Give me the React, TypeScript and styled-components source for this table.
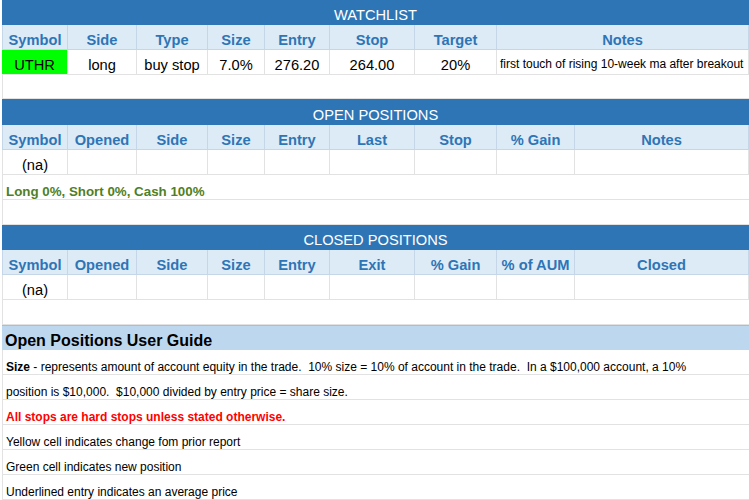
import React from "react";
import styled, { createGlobalStyle } from "styled-components";

const GlobalStyle = createGlobalStyle`
  html, body { margin: 0; padding: 0; background: #ffffff; }
  body { font-family: "Liberation Sans", Arial, sans-serif; color: #000; }
  * { box-sizing: border-box; }
`;

const COLS = "65px 69px 71px 57px 65px 85px 82px 78px 1fr";

const Sheet = styled.div`
  margin-left: 2px;
  width: 747px;
  display: flex;
  flex-direction: column;
`;

const TitleBar = styled.div<{ $h?: number }>`
  height: ${(p) => p.$h ?? 25}px;
  background: #2e75b6;
  color: #ffffff;
  font-size: 14.67px;
  display: flex;
  align-items: flex-end;
  justify-content: center;
  padding-bottom: 2px;
  line-height: 16px;
`;

const GridRow = styled.div<{ $head?: boolean }>`
  display: grid;
  grid-template-columns: ${COLS};
  height: 25px;
  background: ${(p) => (p.$head ? "#ddebf7" : "#ffffff")};
  border-left: 1px solid ${(p) => (p.$head ? "#c5d6e8" : "#e2e2e2")};
  border-bottom: 1px solid ${(p) => (p.$head ? "#c5d6e8" : "#e2e2e2")};
`;

const HeadCell = styled.div<{ $span?: number }>`
  grid-column: span ${(p) => p.$span ?? 1};
  border-right: 1px solid #c5d6e8;
  color: #2e75b6;
  font-weight: bold;
  font-size: 14.67px;
  line-height: 16px;
  display: flex;
  align-items: flex-end;
  justify-content: center;
  padding-bottom: 1px;
  white-space: nowrap;
`;

const Cell = styled.div<{ $span?: number; $green?: boolean; $left?: boolean; $small?: boolean }>`
  grid-column: span ${(p) => p.$span ?? 1};
  margin-left: ${(p) => (p.$green ? "-1px" : "0")};
  border-right: 1px solid #e2e2e2;
  background: ${(p) => (p.$green ? "#00ff00" : "transparent")};
  font-size: ${(p) => (p.$small ? "12px" : "14.67px")};
  line-height: 16px;
  display: flex;
  align-items: flex-end;
  justify-content: ${(p) => (p.$left ? "flex-start" : "center")};
  padding: 0 ${(p) => (p.$left ? "3px" : "0")} ${(p) => (p.$small ? "2px" : "1px")};
  white-space: nowrap;
  overflow: hidden;
`;

const LineRow = styled.div<{ $tone?: "plain" | "green" | "red"; $h?: number }>`
  height: ${(p) => p.$h ?? 25}px;
  border-left: 1px solid #e2e2e2;
  border-bottom: 1px solid #e2e2e2;
  display: flex;
  align-items: flex-end;
  padding: 0 3px 0;
  line-height: 14px;
  white-space: pre;
  font-size: ${(p) => (p.$tone === "green" ? "13.33px" : "12px")};
  font-weight: ${(p) => (p.$tone === "green" || p.$tone === "red" ? "bold" : "normal")};
  color: ${(p) =>
    p.$tone === "green" ? "#4f7f26" : p.$tone === "red" ? "#ff0000" : "#000000"};
`;

const GuideHeader = styled.div`
  height: 25px;
  background: #bdd7ee;
  border-top: 1px solid #9fc0e0;
  display: flex;
  align-items: flex-end;
  padding: 0 3px 1px;
  font-size: 16px;
  line-height: 16px;
  font-weight: bold;
  color: #000;
`;

const watchHead = ["Symbol", "Side", "Type", "Size", "Entry", "Stop", "Target"];
const openHead = ["Symbol", "Opened", "Side", "Size", "Entry", "Last", "Stop", "% Gain", "Notes"];
const closedHead = ["Symbol", "Opened", "Side", "Size", "Entry", "Exit", "% Gain", "% of AUM", "Closed"];

const EmptyCells = ({ n }: { n: number }) => (
  <>
    {Array.from({ length: n }).map((_, i) => (
      <Cell key={i} />
    ))}
  </>
);

export default function App() {
  return (
    <>
      <GlobalStyle />
      <Sheet>
        <TitleBar $h={25}>WATCHLIST</TitleBar>
        <GridRow $head>
          {watchHead.map((h) => (
            <HeadCell key={h}>{h}</HeadCell>
          ))}
          <HeadCell $span={2}>Notes</HeadCell>
        </GridRow>
        <GridRow>
          <Cell $green>UTHR</Cell>
          <Cell>long</Cell>
          <Cell>buy stop</Cell>
          <Cell>7.0%</Cell>
          <Cell>276.20</Cell>
          <Cell>264.00</Cell>
          <Cell>20%</Cell>
          <Cell $span={2} $left $small>
            first touch of rising 10-week ma after breakout
          </Cell>
        </GridRow>
        <LineRow $h={24} />

        <TitleBar $h={26}>OPEN POSITIONS</TitleBar>
        <GridRow $head>
          {openHead.map((h) => (
            <HeadCell key={h}>{h}</HeadCell>
          ))}
        </GridRow>
        <GridRow>
          <Cell>(na)</Cell>
          <EmptyCells n={8} />
        </GridRow>
        <LineRow $tone="green">Long 0%, Short 0%, Cash 100%</LineRow>
        <LineRow />

        <TitleBar>CLOSED POSITIONS</TitleBar>
        <GridRow $head>
          {closedHead.map((h) => (
            <HeadCell key={h}>{h}</HeadCell>
          ))}
        </GridRow>
        <GridRow>
          <Cell>(na)</Cell>
          <EmptyCells n={8} />
        </GridRow>
        <LineRow />

        <GuideHeader>Open Positions User Guide</GuideHeader>
        <LineRow>
          <b>Size</b>
          {" - represents amount of account equity in the trade.  10% size = 10% of account in the trade.  In a $100,000 account, a 10%"}
        </LineRow>
        <LineRow>position is $10,000.  $10,000 divided by entry price = share size.</LineRow>
        <LineRow $tone="red">All stops are hard stops unless stated otherwise.</LineRow>
        <LineRow>Yellow cell indicates change fom prior report</LineRow>
        <LineRow>Green cell indicates new position</LineRow>
        <LineRow>Underlined entry indicates an average price</LineRow>
      </Sheet>
    </>
  );
}
